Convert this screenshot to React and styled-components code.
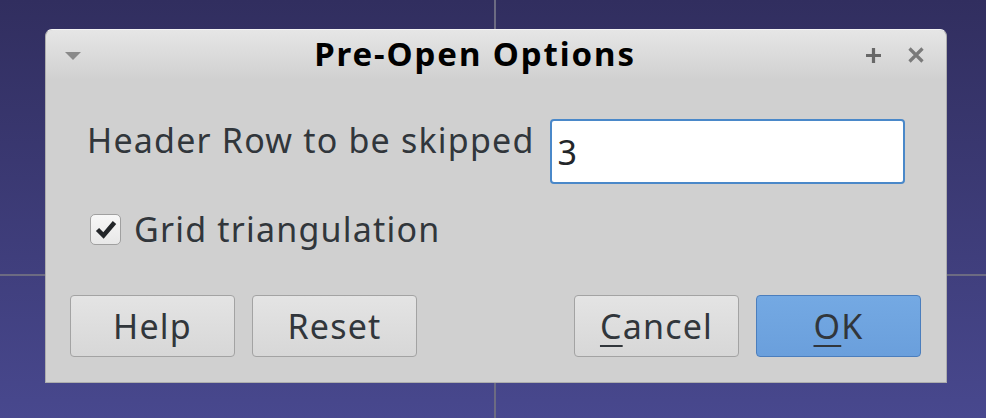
import React from 'react'
import styled, { createGlobalStyle } from 'styled-components'

const Global = createGlobalStyle`
  html, body {
    margin: 0;
    padding: 0;
  }
  body {
    font-family: "Noto Sans", "Open Sans", sans-serif;
    overflow: hidden;
  }
`

const Desktop = styled.div`
  width: 986px;
  height: 418px;
  box-sizing: border-box;
  padding: 29px 0 0 45px;
  background:
    linear-gradient(#6c6b82, #6c6b82) 494px 0 / 2px 100% no-repeat,
    linear-gradient(#6c6b82, #6c6b82) 0 274px / 100% 2px no-repeat,
    linear-gradient(to bottom, #312e5f, #48488e);
`

const Dialog = styled.div`
  width: 902px;
  height: 354px;
  box-sizing: border-box;
  display: flex;
  flex-direction: column;
  background: #d0d0d0;
  border: 1px solid #adadad;
  border-top-color: #f4f4f4;
  border-radius: 7px 7px 0 0;
`

const TitleBar = styled.div`
  height: 50px;
  display: flex;
  align-items: center;
  border-radius: 7px 7px 0 0;
  background: linear-gradient(to bottom, #e6e6e6, #d0d0d0);
`

const MenuSlot = styled.div`
  width: 50px;
  display: flex;
  justify-content: center;
  padding-left: 4px;
  box-sizing: border-box;
`

const Arrow = styled.div`
  width: 0;
  height: 0;
  margin-top: 1px;
  border-left: 8px solid transparent;
  border-right: 8px solid transparent;
  border-top: 8px solid #8a8a8a;
`

const Title = styled.div`
  flex: 1;
  text-align: center;
  font-weight: 700;
  font-size: 33px;
  letter-spacing: 1.9px;
  color: #000;
  margin-top: -3px;
`

const Controls = styled.div`
  width: 92px;
  display: flex;
  align-items: center;
  gap: 25px;
  padding-left: 11px;
  box-sizing: border-box;
`

const Body = styled.div`
  flex: 1;
  display: flex;
  flex-direction: column;
  padding: 0 25px 25px 24px;
`

const Form = styled.div`
  display: flex;
  flex-direction: column;
  padding: 0 21px 0 17px;
`

const Row = styled.div`
  display: flex;
  align-items: ${p => p.align || 'center'};
  gap: ${p => p.gap || 15}px;
  margin-top: ${p => p.top || 0}px;
`

const Label = styled.span`
  font-size: 34px;
  line-height: 46px;
  letter-spacing: 1.2px;
  color: #31363b;
  white-space: nowrap;
  margin-top: ${p => p.shift || 0}px;
`

const Input = styled.input`
  width: 355px;
  height: 65px;
  box-sizing: border-box;
  border: 2px solid #4a88c9;
  border-radius: 4px;
  background: #fff;
  font-family: inherit;
  font-size: 34px;
  color: #232629;
  padding: 0 6px;
  outline: none;
  margin-left: auto;
`

const Check = styled.div`
  width: 31px;
  height: 31px;
  box-sizing: border-box;
  margin-left: 3px;
  border: 1px solid #a0a0a0;
  border-radius: 5px;
  background: linear-gradient(to bottom, #f7f7f7, #e8e8e8);
  display: flex;
  align-items: center;
  justify-content: center;
`

const Buttons = styled.div`
  margin-top: auto;
  display: flex;
  gap: 17px;
`

const Spacer = styled.div`
  flex: 1;
`

const Button = styled.button`
  width: 165px;
  height: 62px;
  box-sizing: border-box;
  border-radius: 4px;
  font-family: inherit;
  font-size: 34px;
  letter-spacing: 1.2px;
  color: #31363b;
  padding: 0;
  border: 1px solid ${p => (p.primary ? '#4b7ebd' : '#a3a3a3')};
  background: ${p =>
    p.primary
      ? 'linear-gradient(to bottom, #74a9e3, #6a9fdc)'
      : 'linear-gradient(to bottom, #e4e4e4, #d7d7d7)'};

  u {
    text-decoration-thickness: 2px;
    text-underline-offset: 6px;
  }
`

const Plus = () => (
  <svg width="17" height="17" viewBox="0 0 17 17">
    <path d="M8.5 1v15M1 8.5h15" stroke="#686868" strokeWidth="3.2" />
  </svg>
)

const Close = () => (
  <svg width="18" height="18" viewBox="0 0 18 18">
    <path d="M2.5 2.5l13 13M15.5 2.5l-13 13" stroke="#7a7a7a" strokeWidth="3.2" />
  </svg>
)

const Tick = () => (
  <svg width="22" height="20" viewBox="0 0 22 20">
    <path d="M2.5 10.5l6 6L19.5 3.5" fill="none" stroke="#232629" strokeWidth="4.5" />
  </svg>
)

const App = () => {
  return (
    <Desktop>
      <Global />
      <Dialog>
        <TitleBar>
          <MenuSlot><Arrow /></MenuSlot>
          <Title>Pre-Open Options</Title>
          <Controls>
            <Plus />
            <Close />
          </Controls>
        </TitleBar>
        <Body>
          <Form>
            <Row top={39} align="flex-start">
              <Label shift={-2}>Header Row to be skipped</Label>
              <Input defaultValue="3" />
            </Row>
            <Row top={22} gap={13}>
              <Check><Tick /></Check>
              <Label>Grid triangulation</Label>
            </Row>
          </Form>
          <Buttons>
            <Button>Help</Button>
            <Button>Reset</Button>
            <Spacer />
            <Button><u>C</u>ancel</Button>
            <Button primary><u>O</u>K</Button>
          </Buttons>
        </Body>
      </Dialog>
    </Desktop>
  )
}

export default App
